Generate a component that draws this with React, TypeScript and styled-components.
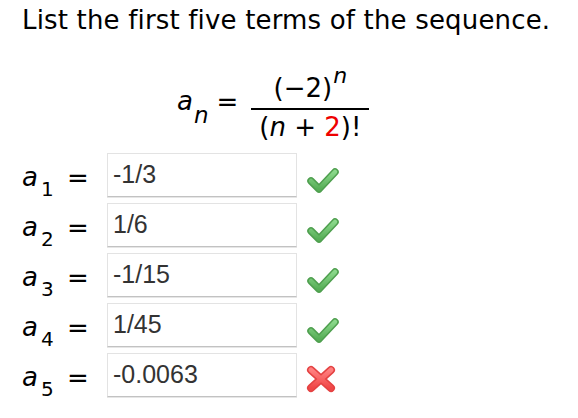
import React from "react";
import styled, { createGlobalStyle } from "styled-components";

const Global = createGlobalStyle`
  html, body { margin: 0; padding: 0; background: #fff; }
  body { font-family: "DejaVu Sans", Verdana, sans-serif; color: #000; }
`;

const Page = styled.div`
  width: 578px;
  height: 418px;
  padding: 5px 0 0 22px;
  box-sizing: border-box;
`;

const Title = styled.div`
  font-size: 26px;
  line-height: 30px;
  letter-spacing: 0.17px;
  white-space: nowrap;
`;

const Formula = styled.div`
  display: flex;
  align-items: flex-start;
  margin: 38px 0 0 155px;
  font-size: 26px;
  line-height: 30px;
`;

const Var = styled.span`
  font-style: italic;
  display: inline-flex;
  align-items: baseline;
  margin-top: 13px;
`;

const Sub = styled.span<{ $size: number; $drop: number; $gap: number; $italic?: boolean }>`
  font-size: ${(p) => p.$size}px;
  line-height: 0;
  position: relative;
  top: ${(p) => p.$drop}px;
  margin-left: ${(p) => p.$gap}px;
  font-style: ${(p) => (p.$italic ? "italic" : "normal")};
`;

const Eq = styled.span`
  margin: 14px 13px 0 8px;
`;

const Frac = styled.span`
  display: inline-flex;
  flex-direction: column;
  align-items: stretch;
  text-align: center;
`;

const Num = styled.span`
  padding-bottom: 5px;
  border-bottom: 2px solid #000;
`;

const Den = styled.span`
  padding: 2px 8px 0;
`;

const Sup = styled.span`
  font-style: italic;
  font-size: 22px;
  line-height: 0;
  position: relative;
  top: -14px;
  margin-left: 1px;
`;

const It = styled.span`
  font-style: italic;
`;

const Red = styled.span`
  color: #e00;
`;

const Rows = styled.div`
  display: flex;
  flex-direction: column;
  gap: 6px;
  margin-top: 11px;
`;

const Row = styled.div`
  display: grid;
  grid-template-columns: 45px 40px 190px 1fr;
  align-items: start;
  height: 44px;
`;

const Label = styled.span`
  font-size: 26px;
  line-height: 30px;
  font-style: italic;
  display: inline-flex;
  align-items: baseline;
  margin-top: 9px;
`;

const RowEq = styled.span`
  font-size: 26px;
  line-height: 30px;
  margin-top: 10px;
`;

const Input = styled.div`
  box-sizing: border-box;
  height: 44px;
  border: 1px solid #e3e3e3;
  border-bottom: 1px solid #c2c2c2;
  box-shadow: 0 1px 0 #e6e6e6;
  padding: 0 0 1px 5px;
  display: flex;
  align-items: center;
  font-family: "Liberation Sans", Arial, sans-serif;
  font-size: 25px;
  color: #333;
`;

const Mark = styled.span<{ $top: number; $left: number }>`
  display: block;
  margin: ${(p) => p.$top}px 0 0 ${(p) => p.$left}px;
  line-height: 0;
`;

const Check = () => (
  <svg width="32" height="26" viewBox="0 0 32 26">
    <defs>
      <linearGradient id="cg" x1="0" y1="0" x2="0" y2="1">
        <stop offset="0" stopColor="#8ad88a" />
        <stop offset="1" stopColor="#56ad56" />
      </linearGradient>
    </defs>
    <polyline points="4,14 12,22 28,5" fill="none" stroke="#4e9f4e" strokeWidth="7.5" strokeLinecap="round" strokeLinejoin="round" />
    <polyline points="4,14 12,22 28,5" fill="none" stroke="url(#cg)" strokeWidth="4.5" strokeLinecap="round" strokeLinejoin="round" />
  </svg>
);

const Cross = () => (
  <svg width="30" height="28" viewBox="0 0 30 28">
    <defs>
      <linearGradient id="xg" x1="0" y1="0" x2="0" y2="1">
        <stop offset="0" stopColor="#ff8080" />
        <stop offset="1" stopColor="#f04646" />
      </linearGradient>
    </defs>
    <g fill="none" strokeLinecap="round">
      <path d="M5 5 L25 23 M25 5 L5 23" stroke="#e44242" strokeWidth="8" />
      <path d="M5 5 L25 23 M25 5 L5 23" stroke="url(#xg)" strokeWidth="5" />
    </g>
  </svg>
);

const rows = [
  { n: 1, v: "-1/3", ok: true },
  { n: 2, v: "1/6", ok: true },
  { n: 3, v: "-1/15", ok: true },
  { n: 4, v: "1/45", ok: true },
  { n: 5, v: "-0.0063", ok: false },
];

export default function App() {
  return (
    <Page>
      <Global />
      <Title>List the first five terms of the sequence.</Title>
      <Formula>
        <Var>
          a
          <Sub $size={23} $drop={13} $gap={1} $italic>
            n
          </Sub>
        </Var>
        <Eq>=</Eq>
        <Frac>
          <Num>
            (−2)<Sup>n</Sup>
          </Num>
          <Den>
            (<It>n</It> + <Red>2</Red>)!
          </Den>
        </Frac>
      </Formula>
      <Rows>
        {rows.map((r) => (
          <Row key={r.n}>
            <Label>
              a
              <Sub $size={20} $drop={10} $gap={3}>
                {r.n}
              </Sub>
            </Label>
            <RowEq>=</RowEq>
            <Input>{r.v}</Input>
            {r.ok ? (
              <Mark $top={14} $left={10}>
                <Check />
              </Mark>
            ) : (
              <Mark $top={12} $left={9}>
                <Cross />
              </Mark>
            )}
          </Row>
        ))}
      </Rows>
    </Page>
  );
}
